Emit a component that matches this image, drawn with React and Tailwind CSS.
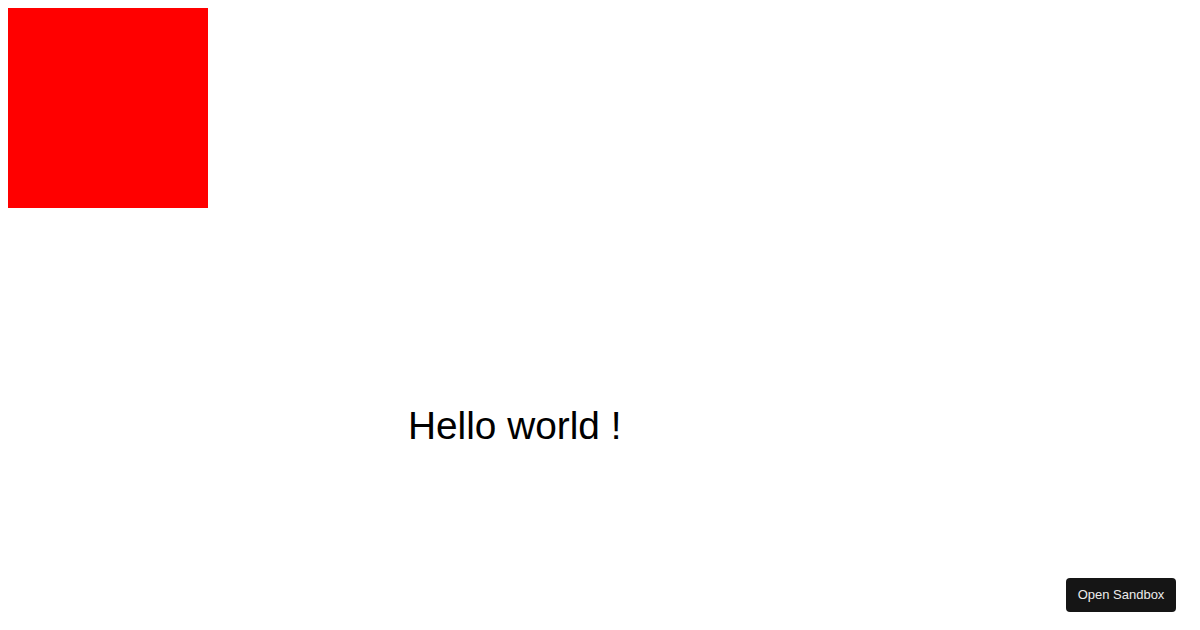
export default function App() {
  return (
    <div className="relative min-h-[630px] bg-white p-2" style={{ fontFamily: '"Liberation Sans", Arial, sans-serif' }}>
      <div className="h-[200px] w-[200px] bg-[#ff0000]"></div>
      <div className="mt-[196px] pl-[400px] text-[38.8px] leading-[44px] text-black">Hello world !</div>
      <button className="fixed bottom-[18px] right-[24px] flex h-[34px] w-[110px] items-center justify-center rounded-[4px] bg-[#151515] text-[13px] text-[#ececec]">
        Open Sandbox
      </button>
    </div>
  );
}
